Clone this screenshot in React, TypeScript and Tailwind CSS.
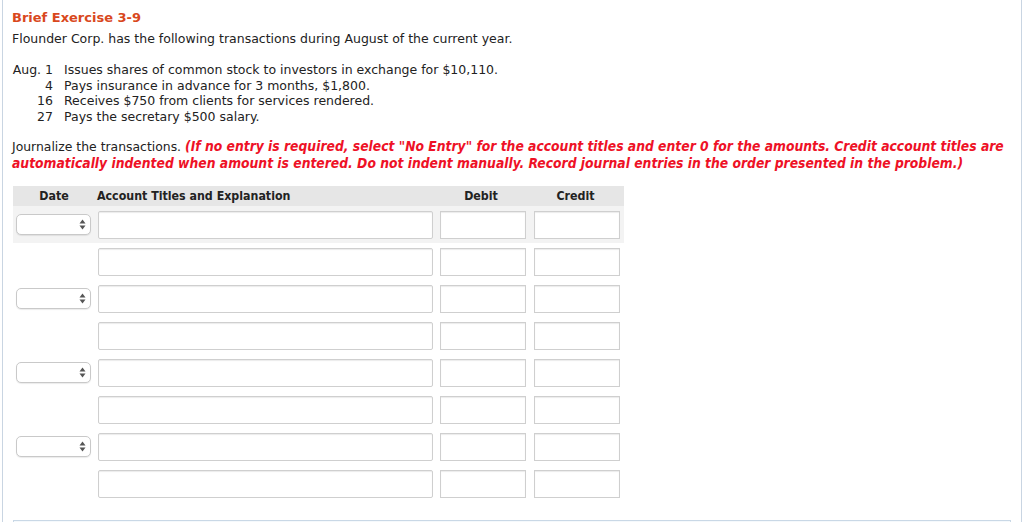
import React from "react";

const Arrows = () => (
  <svg width="7" height="11" viewBox="0 0 7 11" className="shrink-0">
    <path d="M3.5 0.5 L6.5 4.5 L0.5 4.5 Z" fill="#555" />
    <path d="M3.5 10.5 L6.5 6.5 L0.5 6.5 Z" fill="#555" />
  </svg>
);

const Select = () => (
  <div className="w-[75px] h-[21px] border border-[#c9c9c9] rounded-[5px] bg-white flex items-center justify-end pr-[4px] shadow-[0_1px_1px_rgba(0,0,0,0.08)]">
    <Arrows />
  </div>
);

const Row = ({ select, shaded }: { select: boolean; shaded: boolean }) => (
  <div className={`flex items-center h-[37px] ${shaded ? "bg-[#f3f3f3]" : ""}`}>
    <div className="w-[85px] pl-[3px] flex items-center">{select ? <Select /> : null}</div>
    <div className="w-[335px] h-[28px] border border-[#cfcfcf] rounded-[2px] bg-white shadow-[inset_0_1px_1px_rgba(0,0,0,0.08)]" />
    <div className="w-[86px] h-[28px] ml-[7px] border border-[#cfcfcf] bg-white shadow-[inset_0_1px_1px_rgba(0,0,0,0.08)]" />
    <div className="w-[86px] h-[28px] ml-[8px] border border-[#cfcfcf] bg-white shadow-[inset_0_1px_1px_rgba(0,0,0,0.08)]" />
  </div>
);

export default function App() {
  const rows = [true, false, true, false, true, false, true, false];
  return (
    <div className="w-[1024px] h-[522px] overflow-hidden bg-white font-['DejaVu_Sans',sans-serif] text-[#222]">
      <div className="mx-[2px] border-l border-r border-[#c9d5e2] h-full pl-[9px] pt-[10px]">
        <div className="text-[13px] leading-[16px] font-bold text-[#d9481d]">Brief Exercise 3-9</div>
        <div className="text-[12.5px] leading-[16px] mt-[5px]">
          Flounder Corp. has the following transactions during August of the current year.
        </div>
        <div className="text-[12.5px] leading-[15.5px] mt-[15px]">
          {[
            ["Aug. 1", "Issues shares of common stock to investors in exchange for $10,110."],
            ["4", "Pays insurance in advance for 3 months, $1,800."],
            ["16", "Receives $750 from clients for services rendered."],
            ["27", "Pays the secretary $500 salary."],
          ].map(([d, t], i) => (
            <div key={i} className="flex">
              <div className="w-[41px] text-right">{d}</div>
              <div className="ml-[11px]">{t}</div>
            </div>
          ))}
        </div>
        <div className="text-[12.4px] leading-[16px] mt-[14px] w-[1003px]">
          Journalize the transactions.{" "}
          <span className="font-bold italic text-[#ee1126] text-[13.75px] leading-[16px] font-['DejaVu_Sans_Condensed','DejaVu_Sans',sans-serif]">
            (If no entry is required, select "No Entry" for the account titles and enter 0 for the amounts. Credit account titles are automatically indented when amount is entered. Do not indent manually. Record journal entries in the order presented in the problem.)
          </span>
        </div>
        <div className="w-[611px] ml-[1px] mt-[14px] font-['DejaVu_Sans_Condensed','DejaVu_Sans',sans-serif]">
          <div className="flex items-center h-[20px] bg-[#e6e6e6] text-[12.3px] font-bold text-[#222]">
            <div className="w-[82px] text-center">Date</div>
            <div className="w-[343px] pl-[2px]">Account Titles and Explanation</div>
            <div className="w-[86px] text-center">Debit</div>
            <div className="w-[100px] text-center pl-[3px]">Credit</div>
          </div>
          {rows.map((s, i) => (
            <Row key={i} select={s} shaded={i === 0} />
          ))}
        </div>
        <div className="mt-[18px] ml-[1px] w-[998px] h-[20px] border border-[#c9d8e6] bg-[#f5f9fc]" />
      </div>
    </div>
  );
}
